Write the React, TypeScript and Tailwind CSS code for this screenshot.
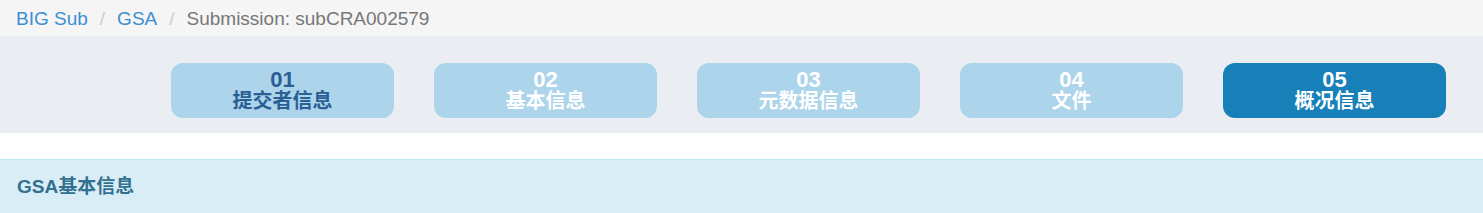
const steps = [
  { no: '01', label: '提交者信息', state: 'current' },
  { no: '02', label: '基本信息', state: 'done' },
  { no: '03', label: '元数据信息', state: 'done' },
  { no: '04', label: '文件', state: 'done' },
  { no: '05', label: '概况信息', state: 'active' },
];

const font = "font-['Liberation_Sans','Noto_Sans_CJK_SC',sans-serif]";

export default function App() {
  return (
    <div className={`w-full bg-white ${font}`}>
      {/* breadcrumb */}
      <ol className="flex h-[36px] items-center bg-[#f5f5f5] px-[16px] text-[19px] leading-none">
        <li className="text-[#3b8fd4]">BIG Sub</li>
        <li className="px-[12px] text-[#cccccc]">/</li>
        <li className="text-[#3b8fd4]">GSA</li>
        <li className="px-[12px] text-[#cccccc]">/</li>
        <li className="text-[#777777]">Submission: subCRA002579</li>
      </ol>

      {/* wizard steps */}
      <div className="flex gap-[40px] bg-[#eaedf2] pb-[15px] pl-[171px] pt-[27px]">
        {steps.map((s) => (
          <div
            key={s.no}
            className={
              'flex h-[55px] w-[223px] flex-col items-center justify-center rounded-[12px] font-bold ' +
              (s.state === 'active'
                ? 'bg-[#1780b9] text-white'
                : s.state === 'current'
                  ? 'bg-[#acd4eb] text-[#2b5f94]'
                  : 'bg-[#acd4eb] text-white')
            }
          >
            <span className="text-[22px] leading-[22px]">{s.no}</span>
            <span className="text-[20px] leading-[21px]">{s.label}</span>
          </div>
        ))}
      </div>

      <div className="h-[26px]" />

      {/* panel */}
      <div className="border-t border-[#bce8f1] bg-[#d9edf7] px-[17px] pt-[16px] pb-[16px]">
        <h3 className="text-[19px] font-bold leading-[22px] text-[#31708f]">GSA基本信息</h3>
      </div>
    </div>
  );
}
